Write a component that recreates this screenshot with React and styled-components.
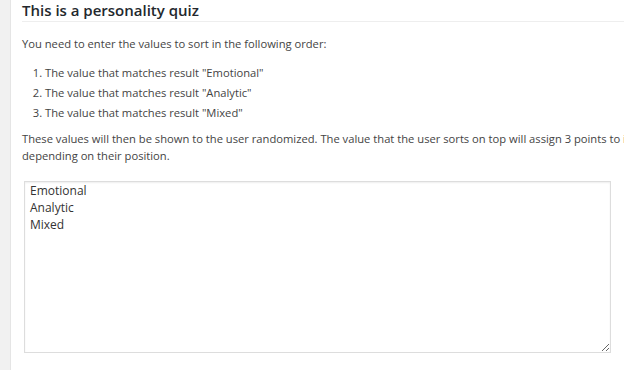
import React from "react";
import styled, { createGlobalStyle } from "styled-components";

const Global = createGlobalStyle`
  html, body { margin: 0; padding: 0; background: #fff; overflow: hidden; }
  body { width: 624px; height: 370px; }
`;

const Page = styled.div`
  display: flex;
  width: 624px;
  height: 370px;
  overflow: hidden;
  font-family: "Open Sans", "Noto Sans", sans-serif;
  color: #444;
`;

const Sidebar = styled.div`
  flex: 0 0 10px;
  background: #f1f1f1;
  border-right: 1px solid #e5e5e5;
`;

const Content = styled.div`
  flex: 0 0 auto;
  width: 800px;
  padding: 0 0 0 11px;
  box-sizing: border-box;
`;

const Title = styled.h3`
  margin: 0;
  padding: 0 0 1px;
  font-size: 15px;
  line-height: 20px;
  font-weight: 600;
  color: #23282d;
  border-bottom: 1px solid #eee;
`;

const Para = styled.p`
  margin: ${(p) => p.$top || 0}px 0 0;
  font-size: 11.2px;
  line-height: ${(p) => p.$lh || 17}px;
  white-space: ${(p) => (p.$nowrap ? "nowrap" : "normal")};
`;

const List = styled.ol`
  margin: 11px 0 0;
  padding: 0 0 0 23px;
  font-size: 11.2px;
  line-height: 20px;
`;

const Item = styled.li`
  margin: 0;
`;

const Area = styled.textarea`
  display: block;
  margin: 17px 0 0 2px;
  width: 587px;
  height: 172px;
  box-sizing: border-box;
  border: 1px solid #ddd;
  box-shadow: inset 0 1px 2px rgba(0, 0, 0, 0.07);
  padding: 1px 5px;
  font-family: "Open Sans", "Noto Sans", sans-serif;
  font-size: 12px;
  line-height: 16.8px;
  color: #333;
  background: #fff;
  outline: none;
`;

export default function App() {
  return (
    <>
      <Global />
      <Page>
        <Sidebar />
        <Content>
          <Title>This is a personality quiz</Title>
          <Para $top={13}>You need to enter the values to sort in the following order:</Para>
          <List>
            <Item>The value that matches result "Emotional"</Item>
            <Item>The value that matches result "Analytic"</Item>
            <Item>The value that matches result "Mixed"</Item>
          </List>
          <Para $top={8} $lh={16.5} $nowrap>
            These values will then be shown to the user randomized. The value that the user sorts on top will assign 3 points to it, 2 points to the second and 1 point to the third
            <br />
            depending on their position.
          </Para>
          <Area defaultValue={"Emotional\nAnalytic\nMixed"} />
        </Content>
      </Page>
    </>
  );
}
